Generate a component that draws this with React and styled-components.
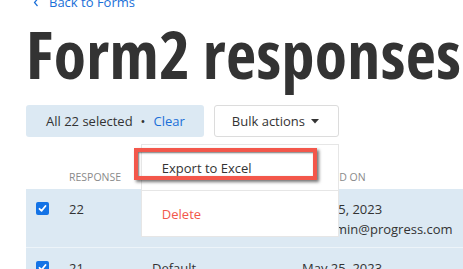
import React from "react";
import styled, { createGlobalStyle } from "styled-components";

const Global = createGlobalStyle`
  html, body { margin: 0; padding: 0; background: #fff; }
  body { font-family: "Open Sans", "Noto Sans", sans-serif; color: #333; overflow: hidden; }
  #root { width: 463px; height: 269px; overflow: hidden; }
`;

const Page = styled.div`
  padding-left: 26px;
  width: 700px;
`;

const BackLink = styled.a`
  display: flex;
  align-items: center;
  gap: 10px;
  margin: -7px 0 0 7px;
  height: 18px;
  font-size: 13px;
  line-height: 18px;
  color: #1a6fd8;
  text-decoration: none;
`;

const Title = styled.h1`
  margin: 9px 0 19px;
  font-family: "Open Sans", sans-serif;
  font-weight: 700;
  font-stretch: 85%;
  font-size: 66px;
  line-height: 66px;
  color: #333;
  letter-spacing: 0.35px;
  white-space: nowrap;
`;

const Toolbar = styled.div`
  display: flex;
  gap: 10px;
  align-items: center;
  height: 32px;
`;

const SelectionPill = styled.div`
  display: flex;
  align-items: center;
  height: 32px;
  padding: 0 19px 0 20px;
  background: #dce9f3;
  border-radius: 3px;
  font-size: 13px;
  color: #333;
`;

const Dot = styled.span`
  margin: 0 8px;
  font-size: 13px;
`;

const LinkText = styled.span`
  color: #1a6fd8;
`;

const BulkWrap = styled.div`
  position: relative;
`;

const BulkButton = styled.button`
  display: flex;
  align-items: center;
  justify-content: space-between;
  width: 125px;
  height: 32px;
  padding: 0 19px 0 17px;
  background: #fff;
  border: 1px solid #dcdcdc;
  border-radius: 3px;
  font-family: "Open Sans", sans-serif;
  font-size: 13px;
  color: #333;
`;

const Menu = styled.div`
  position: absolute;
  top: 39px;
  right: 0;
  width: 198px;
  background: #fff;
  border: 1px solid #e6e6e6;
  box-sizing: border-box;
  z-index: 5;
`;

const MenuItem = styled.div`
  position: relative;
  display: flex;
  align-items: center;
  height: ${(p) => p.$h}px;
  padding-left: 20px;
  font-size: 13px;
  color: ${(p) => (p.$danger ? "#f2574b" : "#333")};
  border-top: ${(p) => (p.$sep ? "1px solid #e6e6e6" : "none")};
`;

const Highlight = styled.div`
  position: absolute;
  left: -8px;
  top: 3px;
  width: 183px;
  height: 32px;
  box-sizing: border-box;
  border: 4px solid #f3574b;
  box-shadow: 2px 2px 3px rgba(0, 0, 0, 0.55), inset 1px 1px 2px rgba(0, 0, 0, 0.55);
  pointer-events: none;
`;

const Table = styled.div`
  margin-top: 0;
`;

const Grid = styled.div`
  display: grid;
  grid-template-columns: 43px 83px 150px 1fr;
`;

const HeaderRow = styled(Grid)`
  height: 52px;
  align-items: end;
  padding-bottom: 5px;
  box-sizing: border-box;
`;

const HeaderCell = styled.div`
  font-size: 10.5px;
  line-height: 14px;
  text-transform: uppercase;
  color: #8a8a8a;
`;

const Row = styled(Grid)`
  background: #dce9f3;
  padding: 10px 0 8px;
  border-bottom: 1px solid #edf4f9;
  font-size: 13px;
  line-height: 20px;
  color: #333;
`;

const CheckCell = styled.div`
  padding: 3px 0 0 10px;
`;

const CheckBox = styled.span`
  display: flex;
  align-items: center;
  justify-content: center;
  width: 13px;
  height: 13px;
  border-radius: 2px;
  background: #1473e6;
`;

const Cell = styled.div`
  white-space: nowrap;
`;

const Check = () => (
  <CheckBox>
    <svg width="9" height="9" viewBox="0 0 9 9">
      <polyline points="1.5,4.8 3.6,6.8 7.5,2" fill="none" stroke="#fff" strokeWidth="1.8" strokeLinecap="round" strokeLinejoin="round" />
    </svg>
  </CheckBox>
);

const rows = [
  { id: 22, variation: "Default", date: "May 25, 2023", by: "by admin@progress.com" },
  { id: 21, variation: "Default", date: "May 25, 2023", by: "by admin@progress.com" },
];

export default function App() {
  return (
    <>
      <Global />
      <Page>
        <BackLink href="#">
          <svg width="6" height="9" viewBox="0 0 6 9">
            <polyline points="4.5,1 1.5,4.5 4.5,8" fill="none" stroke="#1a6fd8" strokeWidth="1.2" />
          </svg>
          Back to Forms
        </BackLink>
        <Title>Form2 responses</Title>
        <Toolbar>
          <SelectionPill>
            All 22 selected<Dot>•</Dot><LinkText>Clear</LinkText>
          </SelectionPill>
          <BulkWrap>
            <BulkButton>
              Bulk actions
              <svg width="8" height="5" viewBox="0 0 8 5">
                <polygon points="0,0 8,0 4,4.5" fill="#333" />
              </svg>
            </BulkButton>
            <Menu>
              <MenuItem $h={45}>
                Export to Excel
                <Highlight />
              </MenuItem>
              <MenuItem $h={45} $sep $danger>
                Delete
              </MenuItem>
            </Menu>
          </BulkWrap>
        </Toolbar>
        <Table>
          <HeaderRow>
            <div />
            <HeaderCell>Response</HeaderCell>
            <HeaderCell>Form variation</HeaderCell>
            <HeaderCell>Created on</HeaderCell>
          </HeaderRow>
          {rows.map((r) => (
            <Row key={r.id}>
              <CheckCell>
                <Check />
              </CheckCell>
              <Cell>{r.id}</Cell>
              <Cell>{r.variation}</Cell>
              <Cell>
                {r.date}
                <br />
                {r.by}
              </Cell>
            </Row>
          ))}
        </Table>
      </Page>
    </>
  );
}
